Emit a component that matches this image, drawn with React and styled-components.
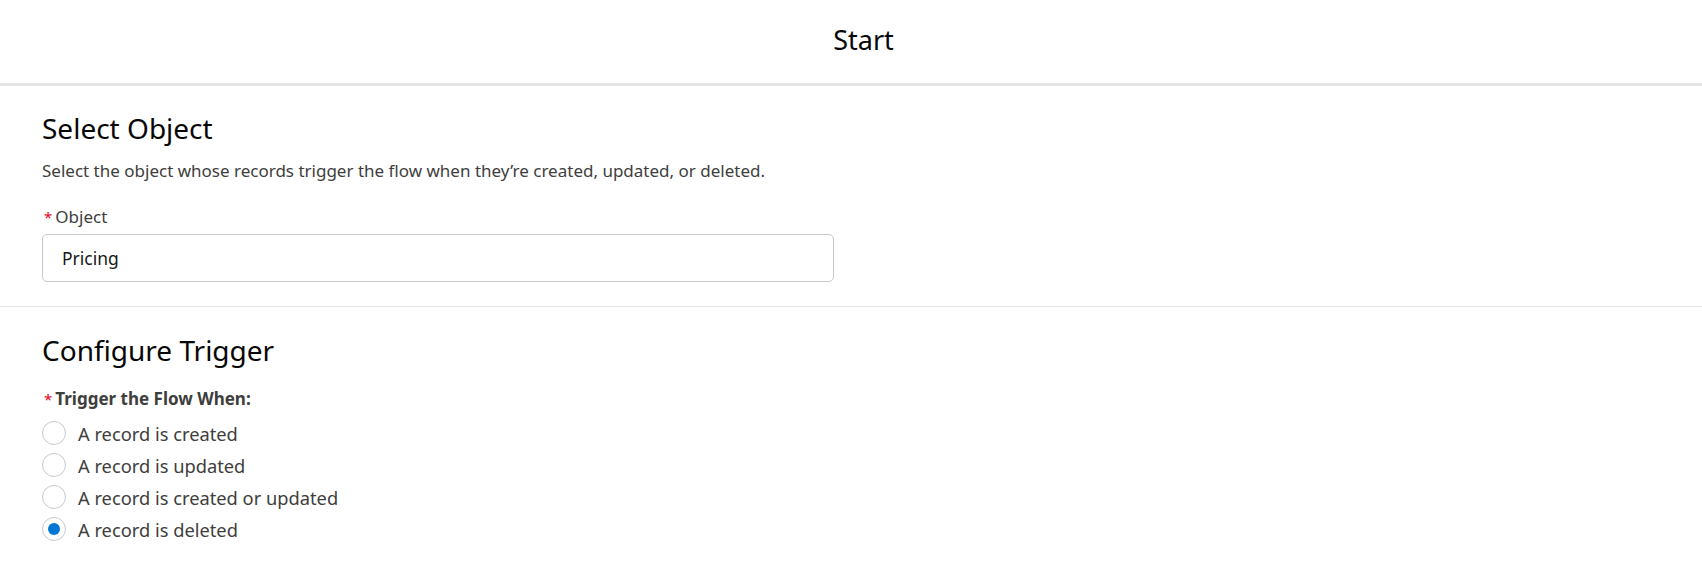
import React from "react";
import styled, { createGlobalStyle } from "styled-components";

const GlobalStyle = createGlobalStyle`
  html, body { margin: 0; padding: 0; background: #ffffff; }
  body { font-family: "Noto Sans", "Open Sans", sans-serif; color: #3e3e3c; }
  * { box-sizing: border-box; }
`;

const Page = styled.div`
  display: flex;
  flex-direction: column;
  width: 100%;
`;

const Header = styled.header`
  height: 86px;
  padding: 22px 0 0 25px;
  display: flex;
  justify-content: center;
  border-bottom: 3px solid #e5e5e5;
`;

const Title = styled.h1`
  margin: 0;
  font-size: 27px;
  line-height: 36px;
  font-weight: 400;
  color: #080707;
`;

const Section = styled.section`
  display: flex;
  flex-direction: column;
  align-items: flex-start;
  padding: ${(p) => p.$top}px 42px ${(p) => p.$bottom}px;
  border-bottom: ${(p) => (p.$divider ? "1px solid #e5e5e5" : "none")};
`;

const SectionTitle = styled.h2`
  margin: 0;
  font-size: 28px;
  line-height: 36px;
  font-weight: 400;
  color: #080707;
`;

const Description = styled.p`
  margin: 13px 0 0;
  font-size: 17px;
  line-height: 24px;
  color: #3e3e3c;
`;

const FieldLabel = styled.label`
  display: flex;
  align-items: baseline;
  margin-top: ${(p) => p.$mt}px;
  font-size: 17px;
  line-height: 24px;
  font-weight: ${(p) => (p.$bold ? 700 : 400)};
  color: #3e3e3c;
`;

const Required = styled.abbr`
  text-decoration: none;
  border: 0;
  color: #ea001e;
  font-size: 15px;
  font-weight: 400;
  margin: 0 3px 0 2px;
`;

const Input = styled.div`
  margin-top: 5px;
  width: 792px;
  height: 48px;
  display: flex;
  align-items: center;
  padding: 0 0 0 19px;
  border: 1px solid #c9c9c9;
  border-radius: 5px;
  background: #ffffff;
  font-size: 17.5px;
  color: #181818;
`;

const RadioGroup = styled.div`
  display: flex;
  flex-direction: column;
  margin-top: 6px;
`;

const RadioRow = styled.label`
  display: flex;
  align-items: center;
  height: 32px;
  gap: 12px;
  font-size: 18.3px;
  color: #3e3e3c;
`;

const RadioCircle = styled.span`
  width: 24px;
  height: 24px;
  border-radius: 50%;
  border: 1px solid #c9c9c9;
  display: flex;
  align-items: center;
  justify-content: center;
  background: #ffffff;
  &::after {
    content: "";
    width: 12px;
    height: 12px;
    border-radius: 50%;
    background: ${(p) => (p.$checked ? "#0176d3" : "transparent")};
  }
`;

const options = [
  "A record is created",
  "A record is updated",
  "A record is created or updated",
  "A record is deleted",
];

export default function App() {
  return (
    <Page>
      <GlobalStyle />
      <Header>
        <Title>Start</Title>
      </Header>
      <Section $top={24} $bottom={24} $divider>
        <SectionTitle>Select Object</SectionTitle>
        <Description>
          Select the object whose records trigger the flow when they’re created, updated, or deleted.
        </Description>
        <FieldLabel $mt={22}>
          <Required title="required">*</Required>Object
        </FieldLabel>
        <Input>Pricing</Input>
      </Section>
      <Section $top={25} $bottom={20}>
        <SectionTitle>Configure Trigger</SectionTitle>
        <FieldLabel $mt={19} $bold>
          <Required title="required">*</Required>Trigger the Flow When:
        </FieldLabel>
        <RadioGroup>
          {options.map((o, i) => (
            <RadioRow key={o}>
              <RadioCircle $checked={i === 3} />
              {o}
            </RadioRow>
          ))}
        </RadioGroup>
      </Section>
    </Page>
  );
}
